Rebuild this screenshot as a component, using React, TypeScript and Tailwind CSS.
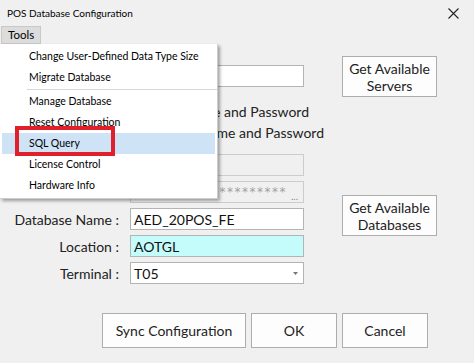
import React from 'react';

const font = { fontFamily: 'Lato, "Noto Sans", sans-serif' };

function Field({ label, children }: { label: string; children: React.ReactNode }) {
  return (
    <div className="flex items-center h-[22px]">
      <div className="w-[119px] text-right text-[14px] text-[#222] whitespace-nowrap">{label}</div>
      <div className="ml-[11px] w-[174px] h-[22px]">{children}</div>
    </div>
  );
}

function Button({ children, className }: { children: React.ReactNode; className: string }) {
  return (
    <div
      className={`flex items-center justify-center text-center text-[14px] leading-[17px] text-[#222] bg-[#fdfdfd] border border-[#adadad] ${className}`}
    >
      {children}
    </div>
  );
}

const menuItems = [
  'Manage Database',
  'Reset Configuration',
  'SQL Query',
  'License Control',
  'Hardware Info',
];

export default function App() {
  return (
    <div className="relative w-[474px] h-[363px] overflow-hidden bg-[#f0f0f0] text-black" style={font}>
      {/* title bar */}
      <div className="flex items-center justify-between h-[26px] pl-[7px] pr-[15px]">
        <span className="text-[10px]">POS Database Configuration</span>
        <svg width="11" height="11" viewBox="0 0 11 11" className="text-[#222]">
          <path d="M0.5 0.5 L10.5 10.5 M10.5 0.5 L0.5 10.5" stroke="currentColor" strokeWidth="1.1" />
        </svg>
      </div>

      {/* menu bar */}
      <div className="flex h-[18px] pl-[1px]">
        <div className="flex items-center px-[6px] h-[18px] text-[11.5px] bg-[#dcdcdc] border border-[#c8c8c8]">Tools</div>
      </div>

      {/* form */}
      <div className="flex">
        <div className="flex flex-col w-[340px]">
          <div className="mt-[21px]">
            <Field label="">
              <div className="w-full h-full bg-white border border-[#b4b4b4]" />
            </Field>
          </div>
          <div className="flex flex-col mt-[14px] text-[14px] text-[#222] whitespace-nowrap">
            <div className="flex items-center justify-end h-[21px] w-[309px]">
              <span>User Name and Password</span>
            </div>
            <div className="flex items-center justify-end h-[21px] w-[324px]">
              <span>Server Username and Password</span>
            </div>
          </div>
          <div className="flex flex-col gap-[5px] mt-[11px]">
            <Field label="">
              <div className="w-full h-full bg-[#f0f0f0] border border-[#cccccc]" />
            </Field>
            <Field label="">
              <div className="relative w-full h-full overflow-hidden bg-[#f0f0f0] border border-[#cccccc] flex items-center justify-end pr-[16px]">
                <span
                  className="text-[12px] leading-[12px] tracking-[1.5px] text-[#a0a0a0] whitespace-nowrap"
                  style={{ fontFamily: '"DejaVu Sans", sans-serif' }}
                >
                  ******************
                </span>
                <span className="absolute right-[5px] bottom-[1px] text-[10px] leading-[10px] text-[#888]">...</span>
              </div>
            </Field>
            <Field label="Database Name :">
              <div className="flex items-center w-full h-full bg-white border border-[#b4b4b4] pl-[3px] text-[14px] text-[#111]">
                AED_20POS_FE
              </div>
            </Field>
            <Field label="Location :">
              <div className="flex items-center w-full h-full bg-[#c4fcfc] border border-[#b4b4b4] pl-[3px] text-[14px] text-[#111]">
                AOTGL
              </div>
            </Field>
            <Field label="Terminal :">
              <div className="flex items-center justify-between w-full h-full bg-white border border-[#b4b4b4] pl-[3px] pr-[5px] text-[14px] text-[#111]">
                <span>T05</span>
                <svg width="5" height="3" viewBox="0 0 5 3">
                  <path d="M0 0 L5 0 L2.5 3 Z" fill="#777" />
                </svg>
              </div>
            </Field>
          </div>
        </div>

        <div className="flex flex-col ml-[2px]">
          <Button className="mt-[12px] w-[95px] h-[41px] text-[13.5px]">
            Get Available
            <br />
            Servers
          </Button>
          <Button className="mt-[98px] w-[95px] h-[41px] text-[13.5px]">
            Get Available
            <br />
            Databases
          </Button>
        </div>
      </div>

      {/* bottom buttons */}
      <div className="flex gap-[5px] pl-[102px] mt-[29px]">
        <Button className="w-[144px] h-[35px]">Sync Configuration</Button>
        <Button className="w-[86px] h-[35px]">OK</Button>
        <Button className="w-[86px] h-[35px]">Cancel</Button>
      </div>

      {/* dropdown menu */}
      <div className="absolute left-0 top-[44px] w-[218px] bg-white border-r border-b border-[#cccccc] shadow-[2px_2px_3px_rgba(0,0,0,0.35)] pt-[2px] pb-[2px] text-[10.5px] whitespace-nowrap">
        <div className="flex items-center h-[21px] pl-[27px] mx-[2px]">Change User-Defined Data Type Size</div>
        <div className="flex items-center h-[21px] pl-[27px] mx-[2px]">Migrate Database</div>
        <div className="h-[2px] ml-[27px] border-t border-[#d7d7d7] mt-[1px]" />
        {menuItems.map((item) => (
          <div
            key={item}
            className={`flex items-center h-[21px] pl-[27px] mx-[2px] ${item === 'SQL Query' ? 'bg-[#cfe3f7]' : ''}`}
          >
            {item}
          </div>
        ))}
      </div>

      {/* red highlight */}
      <div className="absolute left-[15px] top-[126px] w-[100px] h-[30px] border-[4px] border-[#e0202a]" />
    </div>
  );
}
